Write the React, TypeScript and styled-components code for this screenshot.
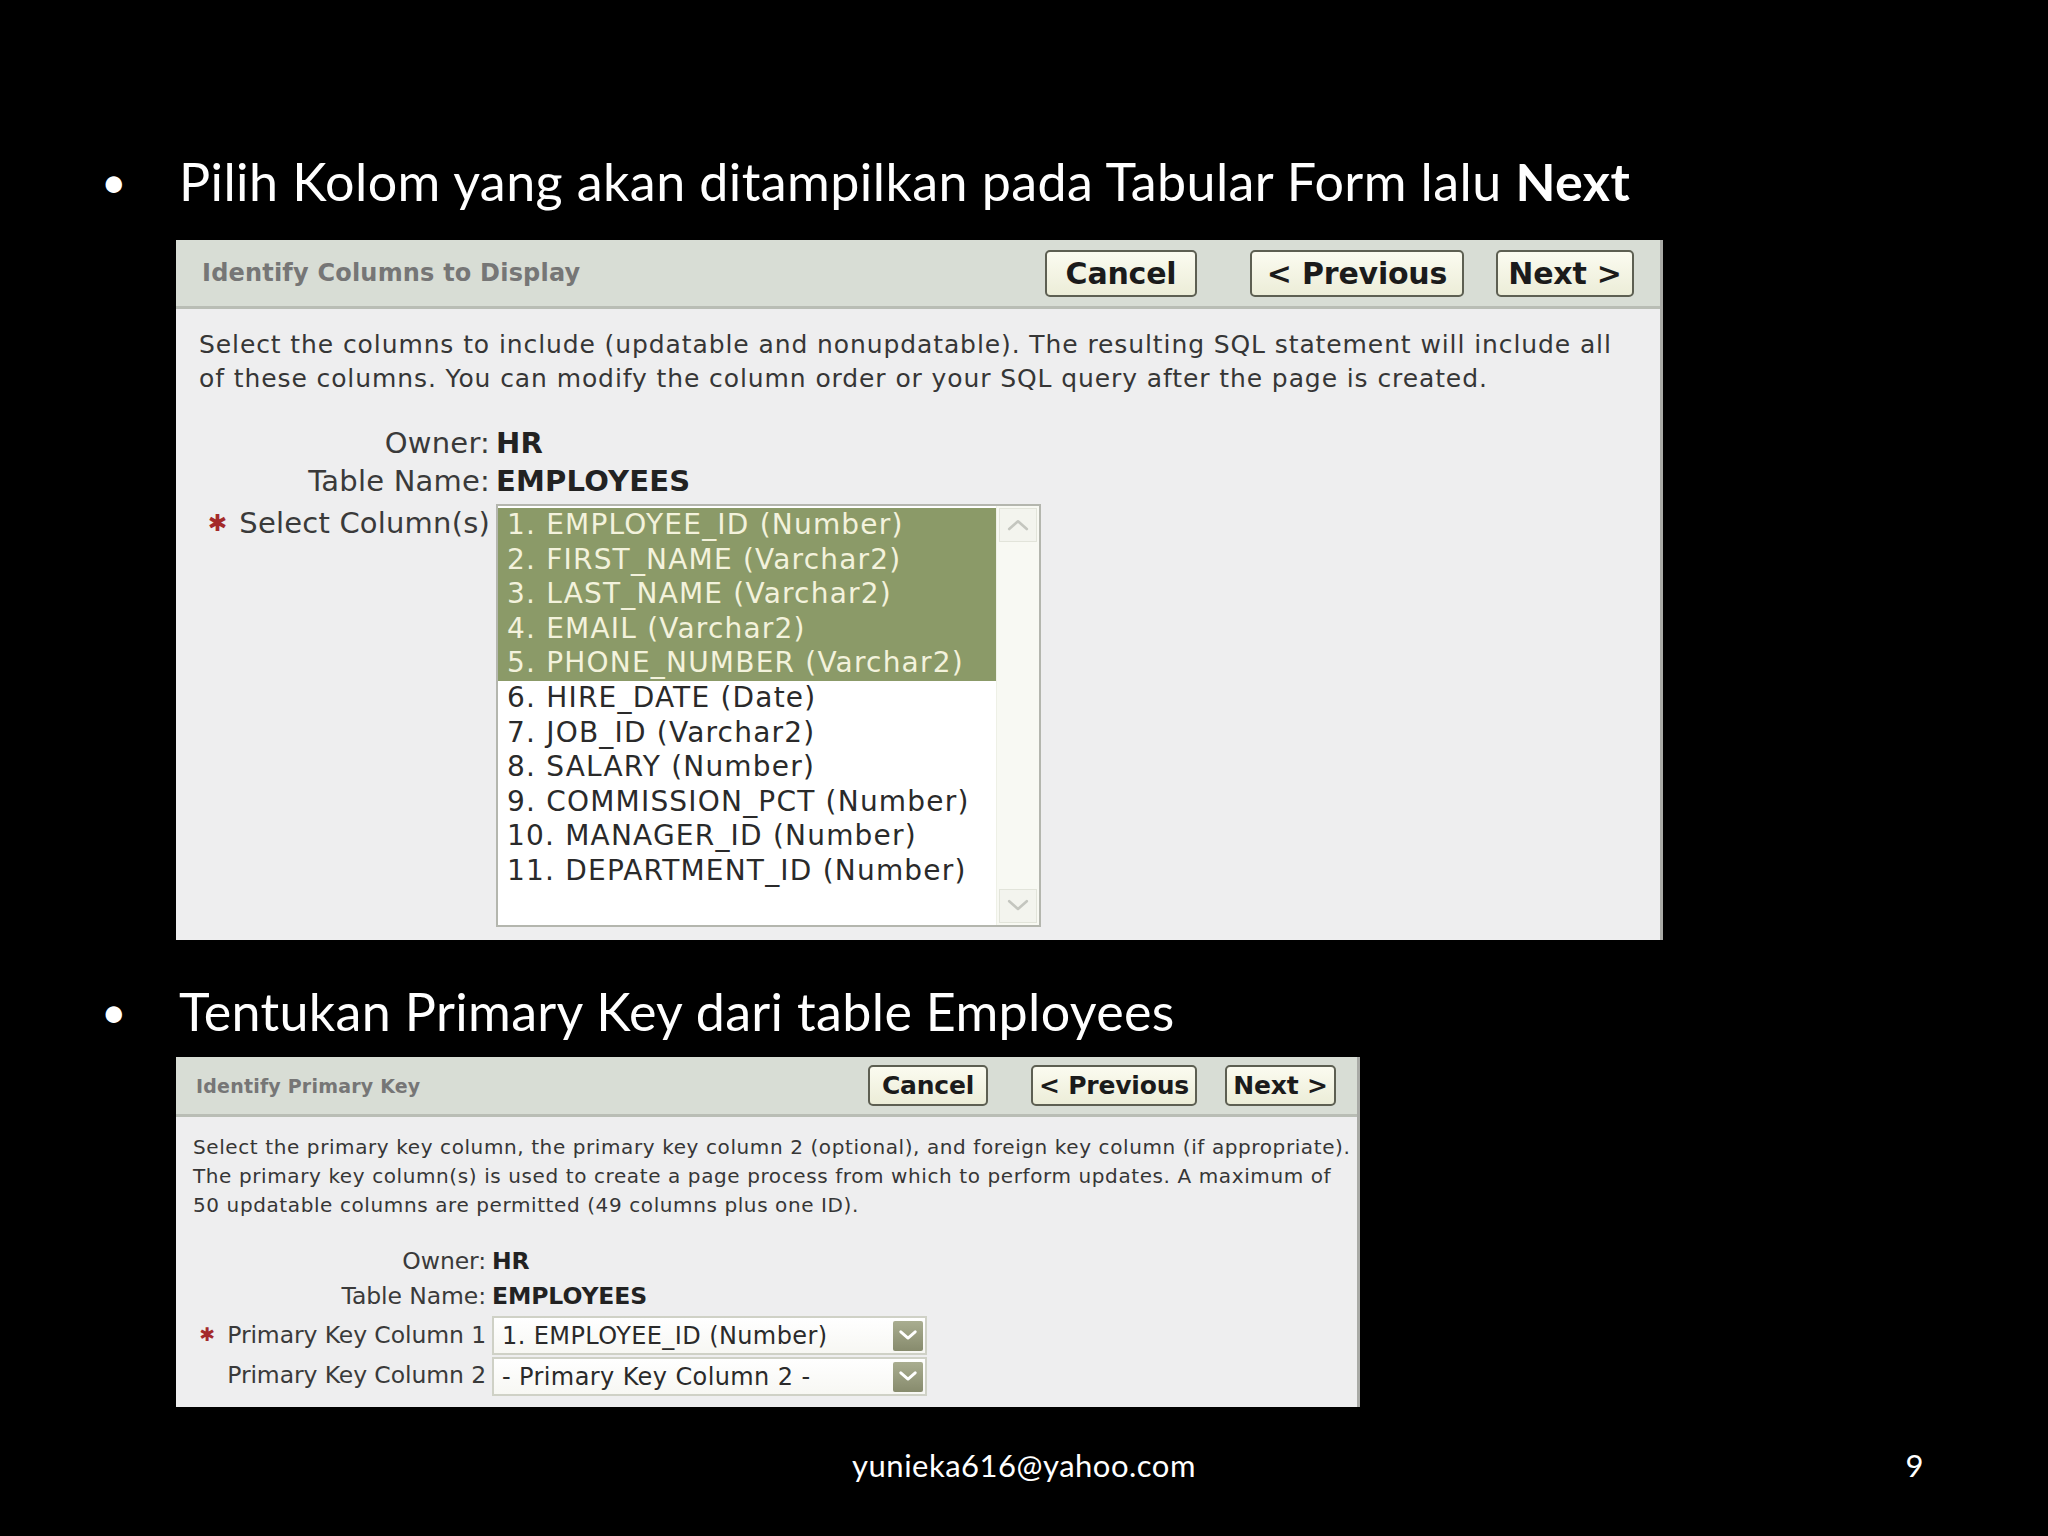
import React from "react";
import styled, { createGlobalStyle } from "styled-components";

const GlobalStyle = createGlobalStyle`
  html, body { margin: 0; padding: 0; background: #000; }
  #root { width: 2048px; height: 1536px; }
`;

const UI_FONT = `"DejaVu Sans", "Liberation Sans", Arial, sans-serif`;
const SLIDE_FONT = `Lato, "Open Sans", "Noto Sans", sans-serif`;

const Slide = styled.div`
  width: 2048px;
  height: 1536px;
  background: #000;
  display: flex;
  flex-direction: column;
  overflow: hidden;
`;

const Bullet = styled.div<{ $top: number; $ls: number }>`
  display: flex;
  align-items: center;
  height: 60px;
  margin-top: ${(p) => p.$top}px;
  color: #fff;
  font-family: ${SLIDE_FONT};
  font-size: 52px;
  letter-spacing: ${(p) => p.$ls}px;
  white-space: nowrap;
`;

const Dot = styled.span`
  width: 78px;
  margin-left: 101px;
  font-size: 44px;
  letter-spacing: 0;
`;

const Panel = styled.section<{ $w: number; $h: number; $top: number }>`
  margin-top: ${(p) => p.$top}px;
  margin-left: 176px;
  width: ${(p) => p.$w}px;
  height: ${(p) => p.$h}px;
  background: #eeeeef;
  border-right: 3px solid #a9aaa6;
  box-sizing: border-box;
  display: flex;
  flex-direction: column;
  font-family: ${UI_FONT};
  overflow: hidden;
`;

const Header = styled.div<{ $h: number; $pl: number; $pr: number }>`
  height: ${(p) => p.$h}px;
  flex: none;
  box-sizing: border-box;
  padding: 0 ${(p) => p.$pr}px 0 ${(p) => p.$pl}px;
  display: flex;
  align-items: center;
  background: #d8ddd5;
  border-bottom: 3px solid #b9bdb5;
`;

const Title = styled.div<{ $size: number; $ls: number }>`
  flex: 1;
  color: #767676;
  font-weight: bold;
  font-size: ${(p) => p.$size}px;
  letter-spacing: ${(p) => p.$ls}px;
`;

const Buttons = styled.div`
  display: flex;
  align-items: center;
`;

const Button = styled.button<{ $w: number; $h: number; $size: number; $gap: number }>`
  width: ${(p) => p.$w}px;
  height: ${(p) => p.$h}px;
  margin-left: ${(p) => p.$gap}px;
  box-sizing: border-box;
  padding: 0;
  border: 2px solid #5d5f52;
  border-radius: 5px;
  background: linear-gradient(#fbfbf0, #ecedd8);
  color: #1b1b1b;
  font-family: ${UI_FONT};
  font-weight: bold;
  font-size: ${(p) => p.$size}px;
  letter-spacing: -0.2px;
  white-space: nowrap;
  cursor: pointer;
`;

const Body = styled.div<{ $pt: number; $pl: number }>`
  padding: ${(p) => p.$pt}px 10px 0 ${(p) => p.$pl}px;
  display: flex;
  flex-direction: column;
`;

const Intro = styled.p<{ $size: number; $lh: number; $ls: number }>`
  margin: 0;
  color: #363636;
  font-size: ${(p) => p.$size}px;
  line-height: ${(p) => p.$lh}px;
  letter-spacing: ${(p) => p.$ls}px;
  white-space: nowrap;
`;

const Form = styled.div<{ $label: number; $top: number; $size: number; $ls: number }>`
  display: grid;
  grid-template-columns: ${(p) => p.$label}px auto;
  column-gap: 6px;
  margin-top: ${(p) => p.$top}px;
  font-size: ${(p) => p.$size}px;
  letter-spacing: ${(p) => p.$ls}px;
  align-items: center;
`;

const Label = styled.div<{ $h: number }>`
  height: ${(p) => p.$h}px;
  line-height: ${(p) => p.$h}px;
  text-align: right;
  color: #3a3a3a;
  white-space: nowrap;
  align-self: start;
`;

const Value = styled.div<{ $h: number }>`
  height: ${(p) => p.$h}px;
  line-height: ${(p) => p.$h}px;
  font-weight: bold;
  color: #222;
  align-self: start;
`;

const Req = styled.span`
  color: #a42a2a;
  font-weight: bold;
  margin-right: 12px;
  font-size: 0.8em;
  vertical-align: 2px;
`;

const ListBox = styled.div`
  width: 545px;
  height: 423px;
  box-sizing: border-box;
  border: 2px solid #b4b6ae;
  background: #fff;
  display: flex;
  margin-top: 4px;
`;

const Items = styled.div`
  flex: 1;
  padding-top: 2px;
  display: flex;
  flex-direction: column;
`;

const Item = styled.div<{ $sel: boolean }>`
  height: 34.6px;
  line-height: 34.6px;
  padding-left: 9px;
  font-size: 28px;
  letter-spacing: 1.2px;
  white-space: nowrap;
  color: ${(p) => (p.$sel ? "#f3f2dc" : "#2a2a2a")};
  background: ${(p) => (p.$sel ? "#8b9a68" : "transparent")};
`;

const Scroll = styled.div`
  width: 43px;
  flex: none;
  background: #f8f9f3;
  border-left: 1px solid #eef0e6;
  display: flex;
  flex-direction: column;
  justify-content: space-between;
  padding: 2px 2px;
  box-sizing: border-box;
`;

const ScrollBtn = styled.div`
  height: 32px;
  border: 1px solid #e2e4da;
  background: #f3f4ee;
  display: flex;
  align-items: center;
  justify-content: center;
`;

const Select = styled.div<{ $top: number }>`
  width: 435px;
  height: 39px;
  margin-top: ${(p) => p.$top}px;
  box-sizing: border-box;
  border: 2px solid #cfd1c6;
  background: linear-gradient(#fff, #f7f7f3);
  display: flex;
  align-items: center;
  padding: 0 2px 0 8px;
  font-size: 24px;
  letter-spacing: 0.4px;
  color: #2a2a2a;
  white-space: nowrap;
  align-self: start;
`;

const SelectText = styled.span`
  flex: 1;
`;

const DropBtn = styled.div`
  width: 30px;
  height: 30px;
  border-radius: 2px;
  background: linear-gradient(#a9ad90, #878b6d);
  display: flex;
  align-items: center;
  justify-content: center;
`;

const Footer = styled.div`
  margin-top: 39px;
  height: 36px;
  display: grid;
  grid-template-columns: 1fr auto 1fr;
  align-items: center;
  color: #fff;
  font-family: ${SLIDE_FONT};
  font-size: 31px;
  letter-spacing: 0.5px;
`;

const PageNo = styled.span`
  justify-self: end;
  padding-right: 124px;
`;

const Chevron = ({ up, color, size, w }: { up?: boolean; color: string; size: number; w: number }) => (
  <svg width={size} height={size * 0.6} viewBox="0 0 20 12">
    <path
      d={up ? "M2 10 L10 3 L18 10" : "M2 2 L10 9 L18 2"}
      fill="none"
      stroke={color}
      strokeWidth={w}
      strokeLinecap="round"
      strokeLinejoin="round"
    />
  </svg>
);

type Cfg = {
  w: number; h: number; top: number; headerH: number; pl: number; pr: number;
  titleSize: number; titleLs: number; btnH: number; btnSize: number;
  btnW: [number, number, number]; gaps: [number, number];
};

const HeaderBar = ({ title, c }: { title: string; c: Cfg }) => (
  <Header $h={c.headerH} $pl={c.pl} $pr={c.pr}>
    <Title $size={c.titleSize} $ls={c.titleLs}>{title}</Title>
    <Buttons>
      <Button $w={c.btnW[0]} $h={c.btnH} $size={c.btnSize} $gap={0}>Cancel</Button>
      <Button $w={c.btnW[1]} $h={c.btnH} $size={c.btnSize} $gap={c.gaps[0]}>&lt; Previous</Button>
      <Button $w={c.btnW[2]} $h={c.btnH} $size={c.btnSize} $gap={c.gaps[1]}>Next &gt;</Button>
    </Buttons>
  </Header>
);

const p1: Cfg = {
  w: 1487, h: 700, top: 29, headerH: 69, pl: 26, pr: 26, titleSize: 24, titleLs: 0.2,
  btnH: 47, btnSize: 30, btnW: [152, 214, 138], gaps: [53, 32],
};
const p2: Cfg = {
  w: 1184, h: 350, top: 16, headerH: 60, pl: 20, pr: 21, titleSize: 19, titleLs: 0.2,
  btnH: 41, btnSize: 25, btnW: [120, 166, 111], gaps: [43, 28],
};

const columns = [
  "1. EMPLOYEE_ID (Number)",
  "2. FIRST_NAME (Varchar2)",
  "3. LAST_NAME (Varchar2)",
  "4. EMAIL (Varchar2)",
  "5. PHONE_NUMBER (Varchar2)",
  "6. HIRE_DATE (Date)",
  "7. JOB_ID (Varchar2)",
  "8. SALARY (Number)",
  "9. COMMISSION_PCT (Number)",
  "10. MANAGER_ID (Number)",
  "11. DEPARTMENT_ID (Number)",
];

export default function App() {
  return (
    <>
      <GlobalStyle />
      <Slide>
        <Bullet $top={151} $ls={0.42}>
          <Dot>•</Dot>
          <span>
            Pilih Kolom yang akan ditampilkan pada Tabular Form lalu <b>Next</b>
          </span>
        </Bullet>

        <Panel $w={p1.w} $h={p1.h} $top={p1.top}>
          <HeaderBar title="Identify Columns to Display" c={p1} />
          <Body $pt={19} $pl={23}>
            <Intro $size={25} $lh={34} $ls={0.9}>
              Select the columns to include (updatable and nonupdatable). The resulting SQL statement will include all
              <br />
              of these columns. You can modify the column order or your SQL query after the page is created.
            </Intro>
            <Form $label={291} $top={28} $size={29} $ls={0.2}>
              <Label $h={38}>Owner:</Label>
              <Value $h={38}>HR</Value>
              <Label $h={38}>Table Name:</Label>
              <Value $h={38}>EMPLOYEES</Value>
              <Label $h={46}>
                <Req>✱</Req>Select Column(s)
              </Label>
              <ListBox>
                <Items>
                  {columns.map((c, i) => (
                    <Item key={c} $sel={i < 5}>{c}</Item>
                  ))}
                </Items>
                <Scroll>
                  <ScrollBtn>
                    <Chevron up color="#c4c6bf" size={22} w={2.4} />
                  </ScrollBtn>
                  <ScrollBtn>
                    <Chevron color="#c4c6bf" size={22} w={2.4} />
                  </ScrollBtn>
                </Scroll>
              </ListBox>
            </Form>
          </Body>
        </Panel>

        <Bullet $top={41} $ls={0.35}>
          <Dot>•</Dot>
          <span>Tentukan Primary Key dari table Employees</span>
        </Bullet>

        <Panel $w={p2.w} $h={p2.h} $top={p2.top}>
          <HeaderBar title="Identify Primary Key" c={p2} />
          <Body $pt={16} $pl={17}>
            <Intro $size={20} $lh={29} $ls={0.6}>
              Select the primary key column, the primary key column 2 (optional), and foreign key column (if appropriate).
              <br />
              The primary key column(s) is used to create a page process from which to perform updates. A maximum of
              <br />
              50 updatable columns are permitted (49 columns plus one ID).
            </Intro>
            <Form $label={293} $top={24} $size={23.5} $ls={-0.1}>
              <Label $h={35}>Owner:</Label>
              <Value $h={35}>HR</Value>
              <Label $h={35}>Table Name:</Label>
              <Value $h={35}>EMPLOYEES</Value>
              <Label $h={41}>
                <Req>✱</Req>Primary Key Column 1
              </Label>
              <Select $top={2}>
                <SelectText>1. EMPLOYEE_ID (Number)</SelectText>
                <DropBtn>
                  <Chevron color="#fff" size={18} w={3.2} />
                </DropBtn>
              </Select>
              <Label $h={41}>Primary Key Column 2</Label>
              <Select $top={2}>
                <SelectText>- Primary Key Column 2 -</SelectText>
                <DropBtn>
                  <Chevron color="#fff" size={18} w={3.2} />
                </DropBtn>
              </Select>
            </Form>
          </Body>
        </Panel>

        <Footer>
          <span />
          <span>yunieka616@yahoo.com</span>
          <PageNo>9</PageNo>
        </Footer>
      </Slide>
    </>
  );
}
